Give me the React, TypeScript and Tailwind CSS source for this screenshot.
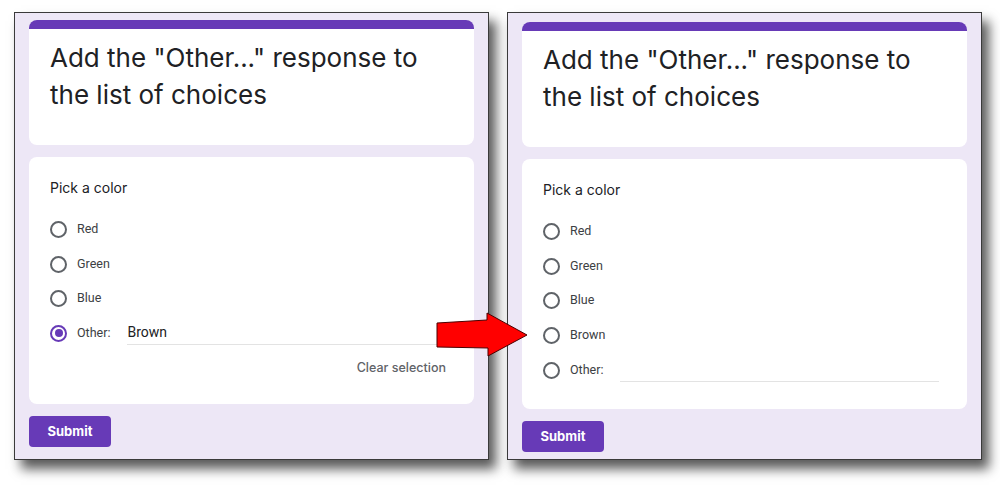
const purple = '#673ab7'

type Option = { label: string; other?: boolean; checked?: boolean; value?: string }

const Radio = ({ checked }: { checked?: boolean }) => (
  <span
    className={`flex h-[17px] w-[17px] shrink-0 items-center justify-center rounded-full border-2 ${
      checked ? 'border-[#673ab7]' : 'border-[#5f6368]'
    }`}
  >
    {checked && <span className="h-[8px] w-[8px] rounded-full bg-[#673ab7]" />}
  </span>
)

const OptionRow = ({ option }: { option: Option }) => (
  <div className="flex h-[34.7px] items-center">
    <div className="flex w-[17px] shrink-0 justify-center">
      <Radio checked={option.checked} />
    </div>
    <span className="ml-[10px] text-[12.5px] text-[#3c4043] [font-family:Roboto,'Liberation_Sans',sans-serif]">
      {option.label}
    </span>
    {option.other && (
      <div className="ml-[17px] flex h-[22px] flex-1 translate-y-[1px] items-center border-b border-[#e3e3e3] pb-[2px] text-[14px] text-[#202124] [font-family:Roboto,'Liberation_Sans',sans-serif]">
        {option.value}
      </div>
    )}
  </div>
)

const FormPanel = ({
  options,
  clear,
  offset,
}: {
  options: Option[]
  clear?: boolean
  offset?: boolean
}) => (
  <div
    className={`flex h-[448px] w-[475px] shrink-0 flex-col border border-[#3a3a3a] bg-[#ede7f6] px-[14px] shadow-[7px_9px_11px_rgba(0,0,0,0.65)] ${
      offset ? 'pt-[9px]' : 'pt-[7px]'
    }`}
  >
    <div className="h-[125px] overflow-hidden rounded-[8px] bg-white">
      <div className="h-[9px]" style={{ background: purple }} />
      <h1 className="px-[21px] pt-[10px] text-[26px] leading-[37px] text-[#202124] [font-family:Inter,'Open_Sans',sans-serif]">
        Add the "Other..." response to the list of choices
      </h1>
    </div>

    <div
      className={`mt-[12px] rounded-[8px] bg-white pl-[21px] pr-[28px] pt-[21px] ${
        clear ? 'pb-[25px]' : 'pb-[22px]'
      }`}
    >
      <p className="text-[14px] leading-[20px] text-[#202124] [font-family:Inter,'Open_Sans',sans-serif]">
        Pick a color
      </p>
      <div className="mt-[14px] flex flex-col">
        {options.map((option) => (
          <OptionRow
            key={option.label}
            option={option}
          />
        ))}
      </div>
      {clear && (
        <div className="mt-[8px] flex h-[20px] items-center justify-end text-[12.5px] font-medium text-[#5f6368] [font-family:Inter,'Open_Sans',sans-serif]">
          Clear selection
        </div>
      )}
    </div>

    <button className="mt-[12px] flex h-[31px] w-[82px] items-center justify-center rounded-[4px] bg-[#673ab7] text-[13px] font-bold text-white [font-family:Inter,'Open_Sans',sans-serif]">
      Submit
    </button>
  </div>
)

export default function App() {
  return (
    <div className="relative h-[493px] w-[1000px] overflow-hidden bg-white">
      <div className="flex gap-[18px] pl-[14px] pt-[12px]">
        <FormPanel
          clear
          options={[
            { label: 'Red' },
            { label: 'Green' },
            { label: 'Blue' },
            { label: 'Other:', other: true, checked: true, value: 'Brown' },
          ]}
        />
        <FormPanel
          offset
          options={[
            { label: 'Red' },
            { label: 'Green' },
            { label: 'Blue' },
            { label: 'Brown' },
            { label: 'Other:', other: true },
          ]}
        />
      </div>

      {/* red callout arrow laid over both panels */}
      <svg
        className="pointer-events-none absolute left-0 top-0"
        width="1000"
        height="493"
      >
        <polygon
          points="437,323 487,320 487,313 527,335 488,356 488,348 437,347"
          fill="#ff0000"
          stroke="#4a0000"
          strokeWidth="1"
          strokeLinejoin="miter"
        />
      </svg>
    </div>
  )
}
